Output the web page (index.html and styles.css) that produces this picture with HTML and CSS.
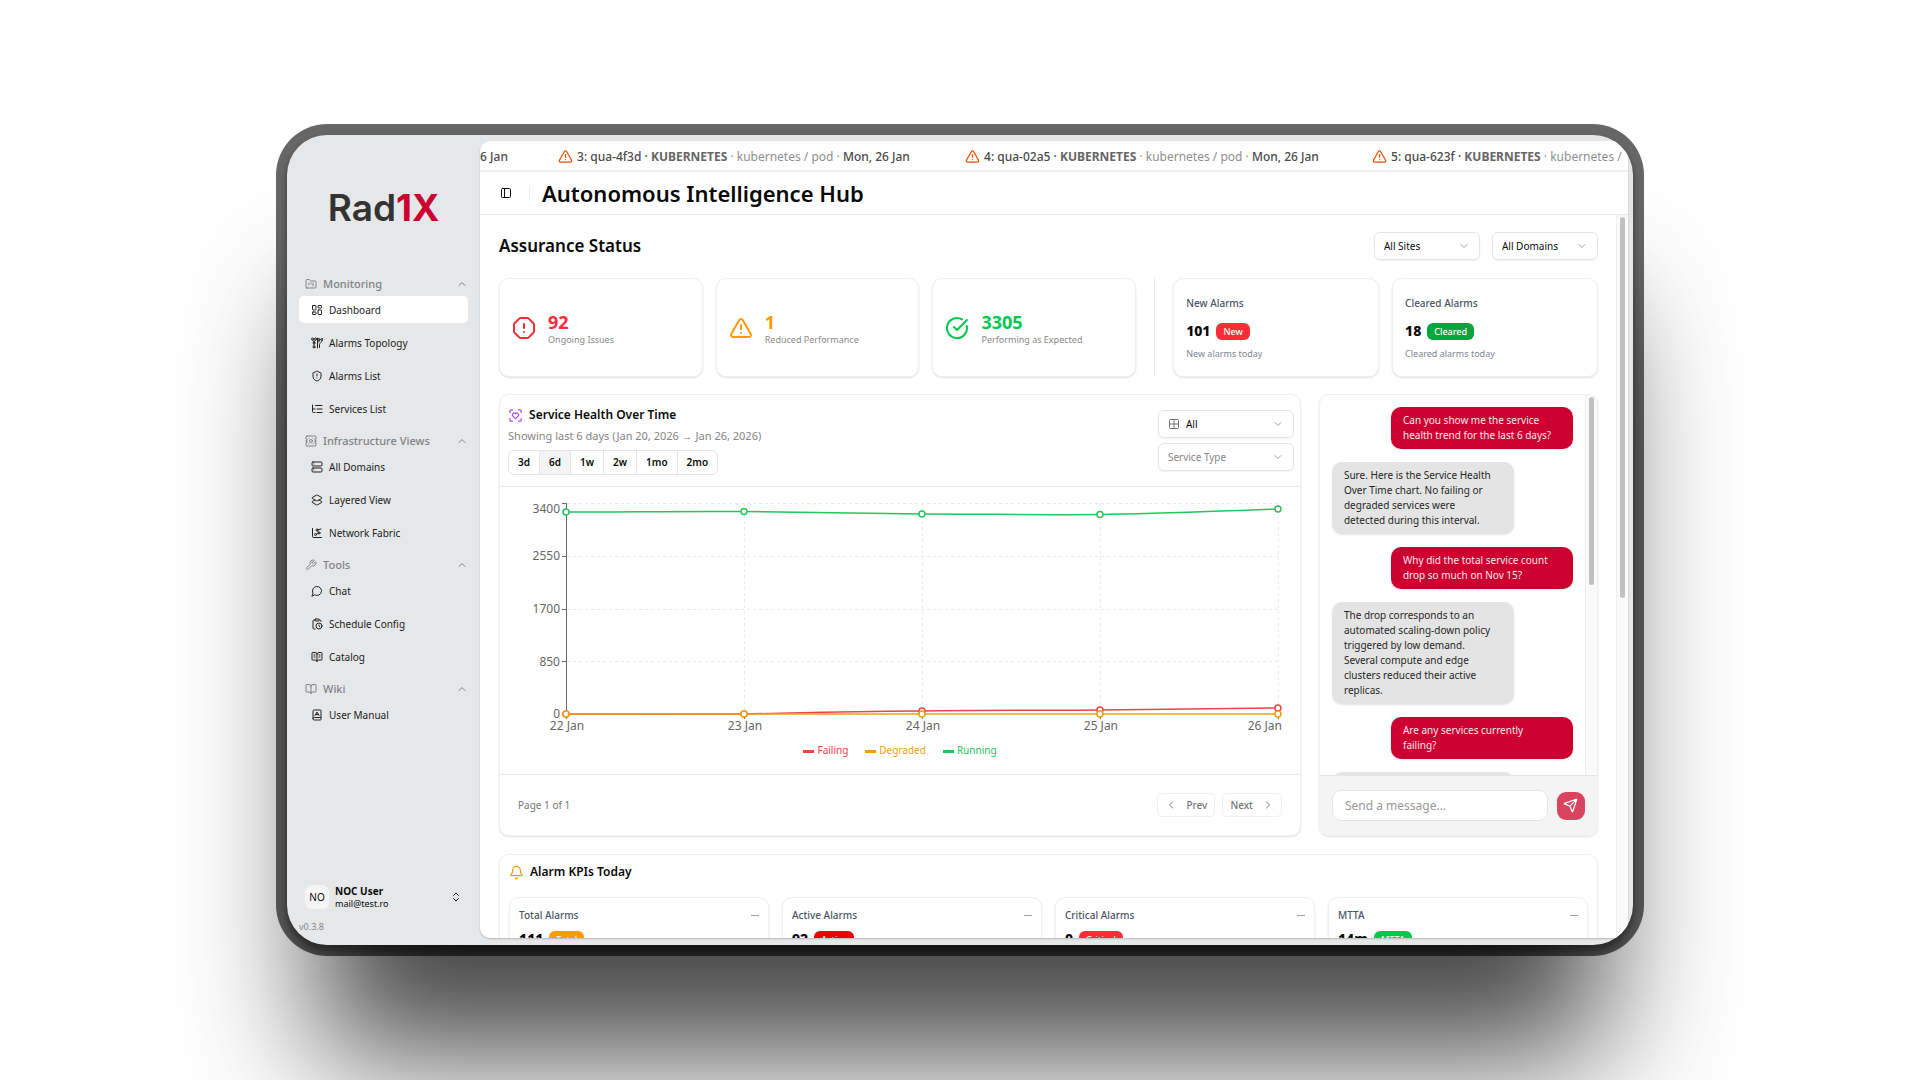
FILE: index.html
```html
<!DOCTYPE html>
<html lang="en">
<head>
    <meta charset="UTF-8">
    <meta name="viewport" content="width=device-width, initial-scale=1.0">
    <title>Rad1X - Autonomous Intelligence Hub</title>
    <link rel="stylesheet" href="styles.css">
</head>
<body>
    <!-- Icon sprite -->
    <svg class="sprite" aria-hidden="true">
        <symbol id="i-alert" viewBox="0 0 24 24"><path d="m21.73 18-8-14a2 2 0 0 0-3.48 0l-8 14A2 2 0 0 0 4 21h16a2 2 0 0 0 1.73-3M12 9v4M12 17h.01"/></symbol>
        <symbol id="i-octagon" viewBox="0 0 24 24"><path d="M12 16h.01M12 8v4M15.312 2a2 2 0 0 1 1.414.586l4.688 4.688A2 2 0 0 1 22 8.688v6.624a2 2 0 0 1-.586 1.414l-4.688 4.688a2 2 0 0 1-1.414.586H8.688a2 2 0 0 1-1.414-.586l-4.688-4.688A2 2 0 0 1 2 15.312V8.688a2 2 0 0 1 .586-1.414l4.688-4.688A2 2 0 0 1 8.688 2z"/></symbol>
        <symbol id="i-check" viewBox="0 0 24 24"><path d="M21.801 10A10 10 0 1 1 17 3.335M9 11l3 3L22 4"/></symbol>
        <symbol id="i-panel" viewBox="0 0 24 24"><rect x="3" y="3" width="18" height="18" rx="2"/><path d="M9 3v18"/></symbol>
        <symbol id="i-folder" viewBox="0 0 24 24"><path d="M4 20h16a2 2 0 0 0 2-2V8a2 2 0 0 0-2-2h-7.93a2 2 0 0 1-1.66-.9l-.82-1.2A2 2 0 0 0 7.93 3H4a2 2 0 0 0-2 2v13c0 1.1.9 2 2 2ZM8 10v4M12 10v2M16 10v6"/></symbol>
        <symbol id="i-dashboard" viewBox="0 0 24 24"><rect x="3" y="3" width="7" height="9" rx="1"/><rect x="14" y="3" width="7" height="5" rx="1"/><rect x="14" y="12" width="7" height="9" rx="1"/><rect x="3" y="16" width="7" height="5" rx="1"/></symbol>
        <symbol id="i-topology" viewBox="0 0 24 24"><circle cx="3" cy="4" r="2"/><circle cx="9" cy="4" r="2"/><circle cx="6" cy="12" r="2"/><circle cx="6" cy="20" r="2"/><path d="M3 6l3 4M9 6l-3 4M6 14v4M13 2v20M17 21v-6c0-3 5-4 5-8M16 7v3"/><circle cx="16" cy="5" r="2"/><circle cx="22" cy="5" r="2"/></symbol>
        <symbol id="i-shield" viewBox="0 0 24 24"><path d="M20 13c0 5-3.5 7.5-7.66 8.95a1 1 0 0 1-.67-.01C7.5 20.5 4 18 4 13V6a1 1 0 0 1 1-1c2 0 4.5-1.2 6.24-2.72a1.17 1.17 0 0 1 1.52 0C14.51 3.81 17 5 19 5a1 1 0 0 1 1 1zM12 8v4M12 16h.01"/></symbol>
        <symbol id="i-tree" viewBox="0 0 24 24"><path d="M22 12h-10M22 5H9M22 19h-10M3 4v6c0 1.100.9 2 2 2h3M3 10v7c0 1.100.9 2 2 2h3"/></symbol>
        <symbol id="i-infra" viewBox="0 0 24 24"><path d="M4 2h16a2 2 0 0 1 2 2v4h-2v3h2v2h-2v3h2v4a2 2 0 0 1-2 2H4a2 2 0 0 1-2-2v-4h2v-3H2v-2h2V8H2V4a2 2 0 0 1 2-2zM8 7h.010M16 7h.010M8 17h.010M16 17h.010"/><circle cx="12" cy="12" r="3"/></symbol>
        <symbol id="i-server" viewBox="0 0 24 24"><rect x="2" y="2" width="20" height="8" rx="2"/><rect x="2" y="14" width="20" height="8" rx="2"/><path d="M6 6h.01M6 18h.01"/></symbol>
        <symbol id="i-layers" viewBox="0 0 24 24"><path d="m16.02 12 5.48 3.13a1 1 0 0 1 0 1.740L13 21.740a2 2 0 0 1-2 0l-8.500-4.870a1 1 0 0 1 0-1.740L7.980 12"/><path d="M13 13.740a2 2 0 0 1-2 0L2.500 8.870a1 1 0 0 1 0-1.740L11 2.260a2 2 0 0 1 2 0l8.500 4.870a1 1 0 0 1 0 1.740Z"/></symbol>
        <symbol id="i-network" viewBox="0 0 24 24"><path d="m13.110 7.664 1.780 2.672M14.162 12.788l-3.324 1.424M20 4l-6.060 1.515M3 3v16a2 2 0 0 0 2 2h16"/><circle cx="12" cy="6" r="2"/><circle cx="16" cy="12" r="2"/><circle cx="9" cy="15" r="2"/></symbol>
        <symbol id="i-wrench" viewBox="0 0 24 24"><path d="M14.7 6.3a1 1 0 0 0 0 1.4l1.6 1.6a1 1 0 0 0 1.4 0l3.77-3.77a6 6 0 0 1-7.94 7.94l-6.91 6.91a2.12 2.12 0 0 1-3-3l6.91-6.91a6 6 0 0 1 7.94-7.94l-3.76 3.76z"/></symbol>
        <symbol id="i-chat" viewBox="0 0 24 24"><path d="M7.900 20A9 9 0 1 0 4 16.100L2 22Z"/></symbol>
        <symbol id="i-schedule" viewBox="0 0 24 24"><path d="M16 14v2.200l1.600 1M16 4h2a2 2 0 0 1 2 2v.832M8 4H6a2 2 0 0 0-2 2v14a2 2 0 0 0 2 2h2"/><circle cx="16" cy="16" r="6"/><rect x="8" y="2" width="8" height="4" rx="1"/></symbol>
        <symbol id="i-catalog" viewBox="0 0 24 24"><path d="M12 7v14M16 12h2M16 8h2M3 18a1 1 0 0 1-1-1V4a1 1 0 0 1 1-1h5a4 4 0 0 1 4 4 4 4 0 0 1 4-4h5a1 1 0 0 1 1 1v13a1 1 0 0 1-1 1h-6a3 3 0 0 0-3 3 3 3 0 0 0-3-3zM6 12h2M6 8h2"/></symbol>
        <symbol id="i-book" viewBox="0 0 24 24"><path d="M12 7v14M3 18a1 1 0 0 1-1-1V4a1 1 0 0 1 1-1h5a4 4 0 0 1 4 4 4 4 0 0 1 4-4h5a1 1 0 0 1 1 1v13a1 1 0 0 1-1 1h-6a3 3 0 0 0-3 3 3 3 0 0 0-3-3z"/></symbol>
        <symbol id="i-manual" viewBox="0 0 24 24"><path d="M4 19.500v-15A2.500 2.500 0 0 1 6.500 2H19a1 1 0 0 1 1 1v18a1 1 0 0 1-1 1H6.500a1 1 0 0 1 0-5H20M8 13l4-7 4 7M9.100 11h5.700"/></symbol>
        <symbol id="i-up" viewBox="0 0 24 24"><path d="m18 15-6-6-6 6"/></symbol>
        <symbol id="i-down" viewBox="0 0 24 24"><path d="m6 9 6 6 6-6"/></symbol>
        <symbol id="i-left" viewBox="0 0 24 24"><path d="m15 18-6-6 6-6"/></symbol>
        <symbol id="i-right" viewBox="0 0 24 24"><path d="m9 18 6-6-6-6"/></symbol>
        <symbol id="i-updown" viewBox="0 0 24 24"><path d="m7 15 5 5 5-5M7 9l5-5 5 5"/></symbol>
        <symbol id="i-heart" viewBox="0 0 24 24"><path d="M17 3h2a2 2 0 0 1 2 2v2M21 17v2a2 2 0 0 1-2 2h-2M3 7V5a2 2 0 0 1 2-2h2M7 21H5a2 2 0 0 1-2-2v-2M7.828 13.070A3 3 0 0 1 12 8.764a3 3 0 0 1 4.172 4.306l-3.447 3.620a1 1 0 0 1-1.449 0z"/></symbol>
        <symbol id="i-grid" viewBox="0 0 24 24"><path d="M12 3v18M3 12h18"/><rect x="3" y="3" width="18" height="18" rx="2"/></symbol>
        <symbol id="i-bell" viewBox="0 0 24 24"><path d="M10.268 21a2 2 0 0 0 3.464 0M3.262 15.326A1 1 0 0 0 4 17h16a1 1 0 0 0 .740-1.673C19.410 13.956 18 12.499 18 8A6 6 0 0 0 6 8c0 4.499-1.411 5.956-2.738 7.326"/></symbol>
        <symbol id="i-send" viewBox="0 0 24 24"><path d="M14.536 21.686a.5.5 0 0 0 .937-.024l6.500-19a.496.496 0 0 0-.635-.635l-19 6.500a.5.5 0 0 0-.024.937l7.930 3.180a2 2 0 0 1 1.112 1.110zM21.854 2.147l-10.940 10.939"/></symbol>
    </svg>

    <div class="device">
        <aside class="sidebar">
            <a href="#" class="logo">Rad<span>1X</span></a>
            <nav class="nav">
                <button class="nav-group"><svg><use href="#i-folder"/></svg>Monitoring<svg class="caret"><use href="#i-up"/></svg></button>
                <a href="#" class="nav-item active"><svg><use href="#i-dashboard"/></svg>Dashboard</a>
                <a href="#" class="nav-item"><svg><use href="#i-topology"/></svg>Alarms Topology</a>
                <a href="#" class="nav-item"><svg><use href="#i-shield"/></svg>Alarms List</a>
                <a href="#" class="nav-item"><svg><use href="#i-tree"/></svg>Services List</a>
                <button class="nav-group"><svg><use href="#i-infra"/></svg>Infrastructure Views<svg class="caret"><use href="#i-up"/></svg></button>
                <a href="#" class="nav-item"><svg><use href="#i-server"/></svg>All Domains</a>
                <a href="#" class="nav-item"><svg><use href="#i-layers"/></svg>Layered View</a>
                <a href="#" class="nav-item"><svg><use href="#i-network"/></svg>Network Fabric</a>
                <button class="nav-group"><svg><use href="#i-wrench"/></svg>Tools<svg class="caret"><use href="#i-up"/></svg></button>
                <a href="#" class="nav-item"><svg><use href="#i-chat"/></svg>Chat</a>
                <a href="#" class="nav-item"><svg><use href="#i-schedule"/></svg>Schedule Config</a>
                <a href="#" class="nav-item"><svg><use href="#i-catalog"/></svg>Catalog</a>
                <button class="nav-group"><svg><use href="#i-book"/></svg>Wiki<svg class="caret"><use href="#i-up"/></svg></button>
                <a href="#" class="nav-item"><svg><use href="#i-manual"/></svg>User Manual</a>
            </nav>
            <button class="user">
                <span class="avatar">NO</span>
                <span class="user-info"><strong>NOC User</strong><span>mail@test.ro</span></span>
                <svg><use href="#i-updown"/></svg>
            </button>
            <div class="version">v0.3.8</div>
        </aside>

        <main class="panel">
            <div class="ticker">
                <div class="ticker-track">
                    <div class="ticker-item first"><span>6 Jan</span></div>
                    <div class="ticker-item"><svg><use href="#i-alert"/></svg><span>3: qua-4f3d · <b>KUBERNETES</b> <i>· kubernetes / pod ·</i> Mon, 26 Jan</span></div>
                    <div class="ticker-item"><svg><use href="#i-alert"/></svg><span>4: qua-02a5 · <b>KUBERNETES</b> <i>· kubernetes / pod ·</i> Mon, 26 Jan</span></div>
                    <div class="ticker-item"><svg><use href="#i-alert"/></svg><span>5: qua-623f · <b>KUBERNETES</b> <i>· kubernetes /</i></span></div>
                </div>
            </div>
            <header class="topbar">
                <button class="toggle" aria-label="Toggle sidebar"><svg><use href="#i-panel"/></svg></button>
                <h1>Autonomous Intelligence Hub</h1>
            </header>

            <div class="scroll">
                <div class="content">
                    <div class="heading-row">
                        <h2>Assurance Status</h2>
                        <div class="select">
                            <select aria-label="Sites"><option>All Sites</option></select>
                            <svg><use href="#i-down"/></svg>
                        </div>
                        <div class="select">
                            <select aria-label="Domains"><option>All Domains</option></select>
                            <svg><use href="#i-down"/></svg>
                        </div>
                    </div>

                    <section class="stats">
                        <div class="stats-group">
                            <div class="card stat red"><svg><use href="#i-octagon"/></svg><div><strong>92</strong><span>Ongoing Issues</span></div></div>
                            <div class="card stat orange"><svg><use href="#i-alert"/></svg><div><strong>1</strong><span>Reduced Performance</span></div></div>
                            <div class="card stat green"><svg><use href="#i-check"/></svg><div><strong>3305</strong><span>Performing as Expected</span></div></div>
                        </div>
                        <div class="divider"></div>
                        <div class="stats-group">
                            <div class="card kpi">
                                <h4>New Alarms</h4>
                                <p class="value">101 <span class="badge bg-red">New</span></p>
                                <p class="note">New alarms today</p>
                            </div>
                            <div class="card kpi">
                                <h4>Cleared Alarms</h4>
                                <p class="value">18 <span class="badge bg-darkgreen">Cleared</span></p>
                                <p class="note">Cleared alarms today</p>
                            </div>
                        </div>
                    </section>

                    <section class="middle">
                        <div class="card health">
                            <div class="health-head">
                                <div class="health-info">
                                    <h3><svg class="purple"><use href="#i-heart"/></svg>Service Health Over Time</h3>
                                    <p>Showing last 6 days (Jan 20, 2026 → Jan 26, 2026)</p>
                                    <div class="ranges">
                                        <button>3d</button><button class="on">6d</button><button>1w</button><button>2w</button><button>1mo</button><button>2mo</button>
                                    </div>
                                </div>
                                <div class="filters">
                                    <div class="select with-icon">
                                        <svg class="lead"><use href="#i-grid"/></svg>
                                        <select aria-label="Group"><option>All</option></select>
                                        <svg><use href="#i-down"/></svg>
                                    </div>
                                    <div class="select muted">
                                        <select aria-label="Service type"><option>Service Type</option></select>
                                        <svg><use href="#i-down"/></svg>
                                    </div>
                                </div>
                            </div>
                            <div class="chart">
                                <svg viewBox="0 0 800 250">
                                    <g class="grid">
                                        <path d="M67 16.500H778M67 69.500H778M67 122.500H778M67 174.500H778"/>
                                        <path d="M244.500 16V228M422.500 16V228M600.500 16V228M778.500 16V228"/>
                                    </g>
                                    <path class="axis" d="M62 16.500h4.500V228M62 69.500h4M62 122.500h4M62 174.500h4M62 227.500h4M66.500 228v4M244.500 228v4M422.500 228v4M600.500 228v4M778.500 228v4"/>
                                    <g class="ylab">
                                        <text x="60" y="26">3400</text>
                                        <text x="60" y="73">2550</text>
                                        <text x="60" y="126">1700</text>
                                        <text x="60" y="179">850</text>
                                        <text x="60" y="231">0</text>
                                    </g>
                                    <g class="xlab">
                                        <text x="67" y="243">22 Jan</text>
                                        <text x="245" y="243">23 Jan</text>
                                        <text x="423" y="243">24 Jan</text>
                                        <text x="601" y="243">25 Jan</text>
                                        <text class="last" x="782" y="243">26 Jan</text>
                                    </g>
                                    <g class="line red">
                                        <path d="M66 227C125 227 185 227.500 244 227C303 226 363 224 422 224C481 223 541 223.500 600 223C659 222 719 222 778 221"/>
                                        <circle cx="66" cy="227" r="3"/><circle cx="244" cy="227" r="3"/><circle cx="422" cy="224" r="3"/><circle cx="600" cy="223" r="3"/><circle cx="778" cy="221" r="3"/>
                                    </g>
                                    <g class="line orange">
                                        <path d="M66 227H778"/>
                                        <circle cx="66" cy="227" r="3"/><circle cx="244" cy="227" r="3"/><circle cx="422" cy="227" r="3"/><circle cx="600" cy="227" r="3"/><circle cx="778" cy="227" r="3"/>
                                    </g>
                                    <g class="line green">
                                        <path d="M66 25C125 25 185 24 244 24.500C303 25 363 26.500 422 27C481 27 541 28 600 27.500C659 27 719 24 778 22"/>
                                        <circle cx="66" cy="25" r="3"/><circle cx="244" cy="24.500" r="3"/><circle cx="422" cy="27" r="3"/><circle cx="600" cy="27.500" r="3"/><circle cx="778" cy="22" r="3"/>
                                    </g>
                                </svg>
                                <ul class="legend">
                                    <li class="red">Failing</li>
                                    <li class="orange">Degraded</li>
                                    <li class="green">Running</li>
                                </ul>
                            </div>
                            <div class="pager">
                                <span>Page 1 of 1</span>
                                <button><svg><use href="#i-left"/></svg>Prev</button>
                                <button>Next<svg><use href="#i-right"/></svg></button>
                            </div>
                        </div>

                        <div class="card chat">
                            <div class="chat-body">
                                <div class="messages">
                                    <p class="msg me">Can you show me the service<br>health trend for the last 6 days?</p>
                                    <p class="msg">Sure. Here is the Service Health<br>Over Time chart. No failing or<br>degraded services were<br>detected during this interval.</p>
                                    <p class="msg me">Why did the total service count<br>drop so much on Nov 15?</p>
                                    <p class="msg">The drop corresponds to an<br>automated scaling-down policy<br>triggered by low demand.<br>Several compute and edge<br>clusters reduced their active<br>replicas.</p>
                                    <p class="msg me">Are any services currently<br>failing?</p>
                                    <div class="msg next"></div>
                                </div>
                                <div class="track"><div class="thumb"></div></div>
                            </div>
                            <form class="composer">
                                <input type="text" placeholder="Send a message..." aria-label="Message">
                                <button type="button" aria-label="Send"><svg><use href="#i-send"/></svg></button>
                            </form>
                        </div>
                    </section>

                    <section class="card alarms">
                        <h3><svg class="orange"><use href="#i-bell"/></svg>Alarm KPIs Today</h3>
                        <div class="alarms-grid">
                            <div class="card kpi"><h4>Total Alarms<span class="dash"></span></h4><p class="value">111 <span class="badge bg-orange">Total</span></p></div>
                            <div class="card kpi"><h4>Active Alarms<span class="dash"></span></h4><p class="value">92 <span class="badge bg-darkred">Active</span></p></div>
                            <div class="card kpi"><h4>Critical Alarms<span class="dash"></span></h4><p class="value">0 <span class="badge bg-red">Critical</span></p></div>
                            <div class="card kpi"><h4>MTTA<span class="dash"></span></h4><p class="value">14m <span class="badge bg-green">MTTA</span></p></div>
                        </div>
                    </section>
                </div>
                <div class="track"><div class="thumb"></div></div>
            </div>
        </main>
    </div>
</body>
</html>
```
FILE: styles.css
```css
* {
    box-sizing: border-box;
    margin: 0;
    padding: 0;
}
body {
    font-family: "Noto Sans", "Open Sans", sans-serif;
    font-size: 10px;
    color: #0a0a0a;
    background-color: #fff;
    height: 100vh;
    display: flex;
    justify-content: center;
    align-items: center;
    overflow: hidden;
}
button, input, select {
    font-family: inherit;
    font-size: inherit;
    color: inherit;
    background: none;
    border: none;
}
a {
    color: inherit;
    text-decoration: none;
}
svg {
    flex: none;
    width: 12px;
    height: 12px;
    fill: none;
    stroke: currentColor;
    stroke-width: 2;
    stroke-linecap: round;
    stroke-linejoin: round;
}
.sprite {
    position: absolute;
    width: 0;
    height: 0;
}

/* Device frame */
.device {
    display: flex;
    width: 70.1%;
    height: 75vh;
    padding: 6px 5px 7px 0;
    background-color: #e6e7e9;
    border-radius: 40px;
    overflow: hidden;
    box-shadow: 0 0 0 11px rgba(0, 0, 0, 0.6), 0 5px 6px 1px rgba(0, 0, 0, 0.35), 0 140px 130px -30px rgba(0, 0, 0, 0.72);
}

/* Sidebar */
.sidebar {
    flex: 0 0 193px;
    display: flex;
    flex-direction: column;
    padding: 0 12px;
}
.logo {
    font-family: Inter, sans-serif;
    font-size: 37px;
    line-height: 44px;
    font-weight: 600;
    text-align: center;
    color: #333;
    margin: 45px 0 41px;
}
.logo span {
    color: #cc0030;
    font-weight: 700;
}
.nav {
    flex: 1;
}
.nav-group {
    display: flex;
    align-items: center;
    gap: 6px;
    width: 100%;
    height: 25px;
    padding: 0 0 0 6px;
    font-size: 11px;
    font-weight: 500;
    color: #808286;
}
.nav-group .caret {
    margin-left: auto;
}
.nav-item {
    display: flex;
    align-items: center;
    gap: 6px;
    height: 27px;
    margin-bottom: 6px;
    padding-left: 12px;
    border-radius: 5px;
    color: #222;
}
.nav-item.active {
    background-color: #fff;
}
.user {
    display: flex;
    align-items: center;
    gap: 6px;
    padding: 0 6px;
    text-align: left;
}
.avatar {
    width: 24px;
    height: 24px;
    line-height: 24px;
    border-radius: 7px;
    text-align: center;
    background-color: #f5f5f5;
}
.user-info {
    flex: 1;
    display: flex;
    flex-direction: column;
    font-size: 9px;
    line-height: 12px;
}
.user-info strong {
    font-size: 10px;
    line-height: 14px;
}
.version {
    margin: 11px 0 5px;
    font-size: 9px;
    line-height: 12px;
    color: #85878a;
}

/* Main panel */
.panel {
    flex: 1;
    min-width: 0;
    display: flex;
    flex-direction: column;
    background-color: #fff;
    border-radius: 10px;
    overflow: hidden;
    box-shadow: 0 1px 2px rgba(0, 0, 0, 0.2);
}
.ticker {
    flex: 0 0 31px;
    border-bottom: 2px solid #efefef;
    overflow: hidden;
}
.ticker-track {
    display: flex;
    height: 30px;
}
.ticker-item {
    flex: 0 0 407px;
    display: flex;
    align-items: center;
    gap: 4px;
    font-size: 12px;
    font-weight: 500;
    color: #4a4a4a;
    white-space: nowrap;
}
.ticker-item.first {
    flex-basis: 78px;
}
.ticker-item svg {
    width: 15px;
    height: 15px;
    color: #f54900;
}
.ticker-item b {
    font-weight: 700;
    color: #666;
}
.ticker-item i {
    font-style: normal;
    font-weight: 400;
    color: #8f8f8f;
}
.topbar {
    flex: 0 0 43px;
    display: flex;
    align-items: center;
    gap: 18px;
    padding-left: 20px;
    border-bottom: 1px solid #ebebeb;
}
.toggle {
    display: flex;
    padding-right: 17px;
    border-right: 1px solid #ebebeb;
}
.topbar h1 {
    font-size: 22px;
    line-height: 28px;
    font-weight: 600;
    margin-left: -6px;
}
.scroll {
    flex: 1;
    min-height: 0;
    display: flex;
    overflow: hidden;
}
.track {
    flex: 0 0 12px;
    padding: 2px 3px;
    background-color: #fafafa;
    border-left: 1px solid #ededed;
}
.thumb {
    height: 53%;
    border-radius: 3px;
    background-color: #c1c1c1;
}
.content {
    flex: 1;
    min-width: 0;
    display: flex;
    flex-direction: column;
    gap: 18px;
    padding: 17px 18px 0 19px;
}
.content > * {
    flex: none;
}
.card {
    background-color: #fff;
    border: 1px solid #f0f0f0;
    border-radius: 10px;
    box-shadow: 0 1px 2px rgba(0, 0, 0, 0.12);
}
.red {
    color: #fb2c36;
}
.orange {
    color: #fe9a00;
}
.green {
    color: #00c950;
}
.purple {
    color: #ad46ff;
}
.heading-row {
    display: flex;
    align-items: center;
    gap: 12px;
}
.heading-row h2 {
    flex: 1;
    font-size: 17px;
    line-height: 24px;
    font-weight: 600;
}
.select {
    position: relative;
    display: flex;
    width: 106px;
    height: 28px;
}
.select select {
    appearance: none;
    width: 100%;
    padding: 0 9px;
    border: 1px solid #e5e5e5;
    border-radius: 6px;
    box-shadow: 0 1px 2px rgba(0, 0, 0, 0.06);
}
.select svg {
    position: absolute;
    right: 10px;
    top: 8px;
    color: #a3a3a3;
}
.select .lead {
    left: 10px;
    color: #737373;
}
.select.with-icon select {
    padding-left: 27px;
}
.select.muted select {
    color: #858585;
}

/* Status cards */
.stats {
    display: grid;
    grid-template-columns: 3fr 1px 2fr;
    gap: 18px;
    height: 98px;
}
.stats-group {
    display: flex;
    gap: 13px;
}
.stats-group .card {
    flex: 1;
}
.divider {
    background-color: #ebebeb;
}
.stat {
    display: flex;
    align-items: center;
    gap: 12px;
    padding: 0 12px;
}
.stat svg {
    width: 24px;
    height: 24px;
}
.stat div {
    padding-top: 4px;
}
.stat strong {
    display: block;
    font-size: 18px;
    line-height: 20px;
}
.stat span {
    display: block;
    font-size: 9px;
    line-height: 16px;
    color: #8a8a8a;
}
.kpi {
    padding: 16px 12px;
}
.kpi h4 {
    display: flex;
    align-items: center;
    justify-content: space-between;
    font-size: 10px;
    line-height: 16px;
    font-weight: 500;
    color: #4a5565;
}
.value {
    display: flex;
    align-items: center;
    gap: 6px;
    margin: 11px 0 8px;
    font-size: 14px;
    line-height: 18px;
    font-weight: 800;
}
.badge {
    padding: 0 7px;
    border-radius: 6px;
    font-size: 9px;
    line-height: 17px;
    font-weight: 500;
    color: #fff;
}
.bg-red {
    background-color: #fb2c36;
}
.bg-darkred {
    background-color: #e7000b;
}
.bg-orange {
    background-color: #fe9a00;
}
.bg-green {
    background-color: #00c950;
}
.bg-darkgreen {
    background-color: #00a63e;
}
.note {
    font-size: 9px;
    line-height: 12px;
    color: #7d8594;
}
.dash {
    width: 8px;
    height: 1px;
    background-color: #99a1af;
}

/* Service health */
.middle {
    display: grid;
    grid-template-columns: minmax(0, 1fr) 279px;
    gap: 18px;
}
h3 {
    display: flex;
    align-items: center;
    gap: 6px;
    font-size: 12px;
    line-height: 16px;
    font-weight: 600;
}
h3 svg {
    width: 15px;
    height: 15px;
}
.health-head {
    display: flex;
    justify-content: space-between;
    padding: 12px 6px 11px 8px;
    border-bottom: 1px solid #e8e8e8;
}
.health-info p {
    margin: 5px 0 6px;
    font-size: 11px;
    line-height: 16px;
    color: #858585;
}
.ranges {
    display: inline-flex;
    border: 1px solid #e5e5e5;
    border-radius: 6px;
    overflow: hidden;
}
.ranges button {
    padding: 0 9px;
    line-height: 23px;
    font-weight: 600;
    border-right: 1px solid #e5e5e5;
}
.ranges button:last-child {
    border-right: none;
}
.ranges .on {
    background-color: #f4f4f4;
}
.filters {
    display: flex;
    flex-direction: column;
    gap: 5px;
    padding-top: 3px;
}
.filters .select {
    width: 136px;
}
.chart {
    height: 288px;
    border-bottom: 1px solid #e8e8e8;
}
.chart svg {
    display: block;
    width: 100%;
    height: 250px;
}
.grid path {
    stroke: #e9e9e9;
    stroke-width: 1;
    stroke-dasharray: 3 3;
    stroke-linecap: butt;
}
.axis {
    stroke: #666;
    stroke-width: 1;
    stroke-linecap: butt;
}
.chart text {
    stroke: none;
    fill: #666;
    font-size: 12px;
}
.ylab {
    text-anchor: end;
}
.xlab {
    text-anchor: middle;
}
.xlab .last {
    text-anchor: end;
}
.line {
    stroke-width: 1.5;
}
.line circle {
    fill: #fff;
}
.chart .red {
    color: #ef4444;
}
.chart .orange {
    color: #f59e0b;
}
.chart .green {
    color: #22c55e;
}
.legend {
    display: flex;
    justify-content: center;
    gap: 17px;
    list-style: none;
    line-height: 16px;
    padding-top: 5px;
}
.legend li::before {
    content: "";
    display: inline-block;
    width: 11px;
    height: 3px;
    margin-right: 3px;
    vertical-align: middle;
    background-color: currentColor;
}
.pager {
    display: flex;
    align-items: center;
    gap: 7px;
    height: 60px;
    padding: 0 18px;
    color: #777;
}
.pager span {
    flex: 1;
}
.pager button {
    display: flex;
    align-items: center;
    gap: 9px;
    height: 24px;
    padding: 0 7px;
    font-weight: 500;
    border: 1px solid #f0f0f0;
    border-radius: 5px;
}

/* Chat */
.chat {
    display: flex;
    flex-direction: column;
    overflow: hidden;
}
.chat-body {
    flex-grow: 1;
    height: 0;
    display: flex;
    overflow: hidden;
}
.messages {
    flex: 1;
    display: flex;
    flex-direction: column;
    align-items: flex-start;
    gap: 13px;
    padding: 12px;
}
.msg {
    flex: none;
    width: 182px;
    padding: 6px 12px;
    line-height: 15px;
    border-radius: 10px;
    color: #262626;
    background-color: #e4e4e4;
    box-shadow: 0 1px 2px rgba(0, 0, 0, 0.1);
    white-space: nowrap;
}
.msg.me {
    align-self: flex-end;
    color: #fde8ec;
    background-color: #cc0030;
}
.msg.next {
    height: 57px;
}
.chat .thumb {
    height: 50%;
}
.composer {
    display: flex;
    align-items: center;
    gap: 9px;
    height: 60px;
    padding: 0 12px;
    border-top: 1px solid #e5e5e5;
    background-color: #f4f4f4;
}
.composer input {
    flex: 1;
    min-width: 0;
    height: 31px;
    padding: 0 12px;
    font-size: 12px;
    border: 1px solid #e5e5e5;
    border-radius: 9px;
    background-color: #fff;
}
.composer input::placeholder {
    color: #999;
}
.composer button {
    display: flex;
    align-items: center;
    justify-content: center;
    width: 28px;
    height: 28px;
    border-radius: 9px;
    color: #fff;
    background-color: #d9455f;
}
.composer svg {
    width: 15px;
    height: 15px;
}

/* Alarm KPIs */
.alarms {
    padding: 9px;
}
.alarms-grid {
    display: grid;
    grid-template-columns: repeat(4, 1fr);
    gap: 13px;
    margin-top: 17px;
}
.alarms .kpi {
    padding: 9px;
}
.alarms .value {
    margin: 7px 0;
}
```
